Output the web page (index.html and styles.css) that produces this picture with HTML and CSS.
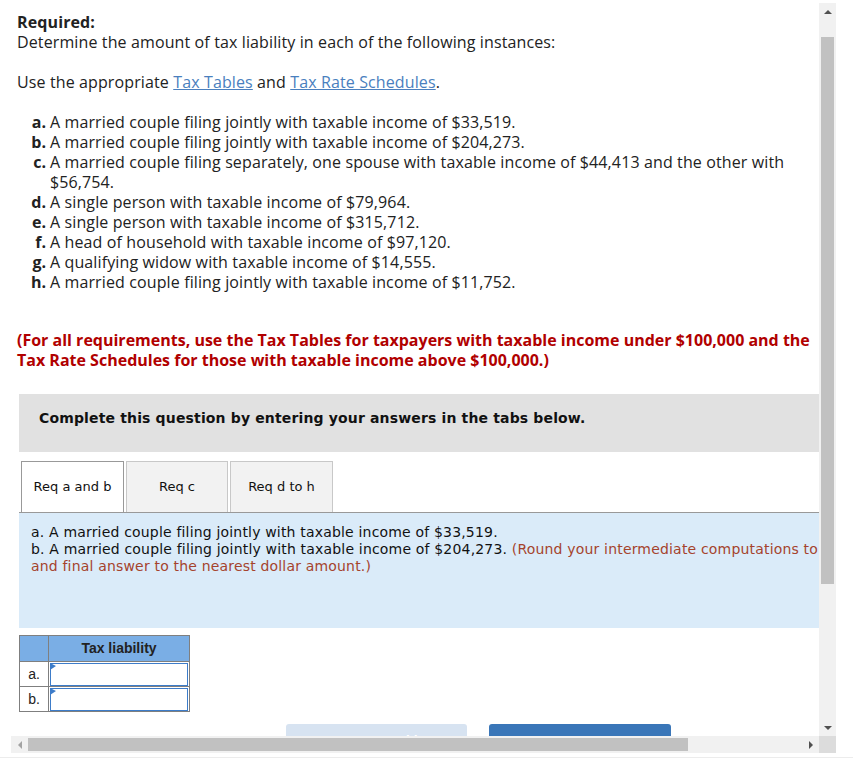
FILE: index.html
```html
<!DOCTYPE html>
<html lang="en">
<head>
<meta charset="utf-8">
<title>Tax liability</title>
<link rel="stylesheet" href="styles.css">
</head>
<body>
<div class="frame">
  <div class="view">
    <div class="content">
      <div class="question">
        <p class="req"><strong>Required:</strong><br>Determine the amount of tax liability in each of the following instances:</p>
        <p class="use">Use the appropriate <a href="#">Tax Tables</a> and <a href="#">Tax Rate Schedules</a>.</p>
        <div class="items">
          <span class="lbl">a.</span><span>A married couple filing jointly with taxable income of $33,519.</span>
          <span class="lbl">b.</span><span>A married couple filing jointly with taxable income of $204,273.</span>
          <span class="lbl">c.</span><span>A married couple filing separately, one spouse with taxable income of $44,413 and the other with $56,754.</span>
          <span class="lbl">d.</span><span>A single person with taxable income of $79,964.</span>
          <span class="lbl">e.</span><span>A single person with taxable income of $315,712.</span>
          <span class="lbl">f.</span><span>A head of household with taxable income of $97,120.</span>
          <span class="lbl">g.</span><span>A qualifying widow with taxable income of $14,555.</span>
          <span class="lbl">h.</span><span>A married couple filing jointly with taxable income of $11,752.</span>
        </div>
        <p class="note">(For all requirements, use the Tax Tables for taxpayers with taxable income under $100,000 and the Tax Rate Schedules for those with taxable income above $100,000.)</p>
      </div>

      <div class="section">
        <div class="banner">Complete this question by entering your answers in the tabs below.</div>
        <div class="tabs">
          <div class="tab active">Req a and b</div>
          <div class="tab">Req c</div>
          <div class="tab">Req d to h</div>
        </div>
        <div class="panel">
          a. A married couple filing jointly with taxable income of $33,519.<br>
          b. A married couple filing jointly with taxable income of $204,273. <span class="hint">(Round your intermediate computations to 2 decimal places and final answer to the nearest dollar amount.)</span>
        </div>
        <table class="grid">
          <tr class="head"><th class="c1"></th><th class="c2">Tax liability</th></tr>
          <tr><td class="c1">a.</td><td class="c2 cell"><div class="inp"></div></td></tr>
          <tr><td class="c1">b.</td><td class="c2 cell"><div class="inp"></div></td></tr>
        </table>
        <div class="nav">
          <div class="btn prev">&lt; Req a and b</div>
          <div class="btn next">Req c &gt;</div>
        </div>
      </div>
    </div>
  </div>

  <div class="vbar">
    <div class="sbtn"><svg width="8" height="4" viewBox="0 0 8 4"><polygon points="4,0 8,4 0,4" fill="#505050"/></svg></div>
    <div class="vtrack"><div class="vthumb"></div></div>
    <div class="sbtn"><svg width="8" height="4" viewBox="0 0 8 4"><polygon points="0,0 8,0 4,4" fill="#505050"/></svg></div>
  </div>

  <div class="hbar">
    <div class="sbtn"><svg width="4" height="8" viewBox="0 0 4 8"><polygon points="4,0 4,8 0,4" fill="#a3a3a3"/></svg></div>
    <div class="htrack"><div class="hthumb"></div></div>
    <div class="sbtn"><svg width="4" height="8" viewBox="0 0 4 8"><polygon points="0,0 4,4 0,8" fill="#505050"/></svg></div>
  </div>

  <div class="corner"></div>
</div>
<div class="footer"></div>
</body>
</html>
```

FILE: styles.css
```css
html, body { margin: 0; padding: 0; background: #fff; }
body { font-family: "Open Sans", "Noto Sans", sans-serif; color: #222; }

.frame {
  margin: 3px 0 0 11px;
  width: 825px;
  height: 750px;
  display: grid;
  grid-template-columns: 808px 17px;
  grid-template-rows: 733px 17px;
}
.view { overflow: hidden; }

.vbar, .hbar { display: flex; background: #f1f1f1; }
.vbar { flex-direction: column; }
.sbtn {
  width: 17px;
  height: 17px;
  flex: none;
  display: flex;
  align-items: center;
  justify-content: center;
}
.vtrack { flex: 1; padding-top: 17px; }
.vthumb { height: 547px; margin: 0 2px; background: #c1c1c1; }
.htrack { flex: 1; display: flex; align-items: center; }
.hthumb { width: 660px; height: 13px; background: #c1c1c1; }
.corner { background: #dcdcdc; }

.content { padding: 9px 0 0 6px; }

.question { font-size: 16px; letter-spacing: 0.12px; line-height: 20px; }
.question p { margin: 0; }
.req strong { font-weight: 700; }
.use { margin-top: 20px !important; }
.use a { color: #4a7fbe; text-decoration: underline; }
.items {
  display: grid;
  grid-template-columns: 17px 1fr;
  column-gap: 4px;
  margin: 20px 0 0 12px;
}
.items .lbl { font-weight: 700; text-align: right; letter-spacing: 0; }
.note { margin-top: 38px !important; color: #b10000; font-weight: 700; letter-spacing: 0; }

.section {
  width: 940px;
  margin: 24px 0 0 2px;
  font-family: "DejaVu Sans", Verdana, sans-serif;
  font-size: 14px;
  letter-spacing: 0.18px;
  line-height: 17px;
  color: #111;
}
.banner {
  background: #e1e1e1;
  font-weight: 700;
  letter-spacing: 0.15px;
  padding: 16px 20px 25px;
}
.tabs {
  display: flex;
  gap: 2px;
  margin-top: 9px;
  padding-left: 2px;
  border-bottom: 1px solid #999;
  font-size: 13px;
  letter-spacing: 0;
}
.tab {
  width: 101px;
  text-align: center;
  padding: 16px 0 17px;
  background: #f2f2f2;
  border: 1px solid #c8c8c8;
  border-bottom: 0;
}
.tab:nth-child(2) { width: 100px; }
.tab.active { background: #fff; border-color: #999; }
.panel {
  background: #daebf9;
  height: 115px;
  box-sizing: border-box;
  padding: 11px 12px 0;
}
.hint { color: #a5432d; }

.grid {
  margin-top: 7px;
  border-collapse: collapse;
  font-family: "Liberation Sans", Arial, sans-serif;
  font-size: 14px;
  letter-spacing: 0;
  color: #222;
}
.grid th, .grid td { border: 1px solid #7f7f7f; padding: 0; }
.grid .head th { background: #7aaee5; height: 25px; font-weight: 700; }
.grid td { height: 24px; text-align: center; }
.grid .c1 { width: 28px; }
.grid .c2 { width: 138px; }
.cell { position: relative; padding: 0 1px !important; }
.inp {
  height: 21px;
  border: 1px solid #3d7cc9;
  background: #fff;
}
.cell::before {
  content: "";
  position: absolute;
  left: 1px;
  top: 1px;
  border-left: 6px solid #3d7cc9;
  border-top: 3px solid transparent;
  border-bottom: 4px solid transparent;
}

.nav {
  display: flex;
  gap: 22px;
  margin-top: 12px;
  padding-left: 267px;
}
.btn {
  width: 181px;
  height: 40px;
  box-sizing: border-box;
  padding-top: 9px;
  border-radius: 3px;
  text-align: center;
  color: #fff;
  font-family: "Liberation Sans", Arial, sans-serif;
  font-weight: 700;
  font-size: 14px;
  letter-spacing: 0;
}
.prev { background: #d7e3f1; }
.next { background: #3a76b8; width: 182px; }

.footer { margin-top: 4px; border-top: 1px solid #ececec; height: 8px; }
```
